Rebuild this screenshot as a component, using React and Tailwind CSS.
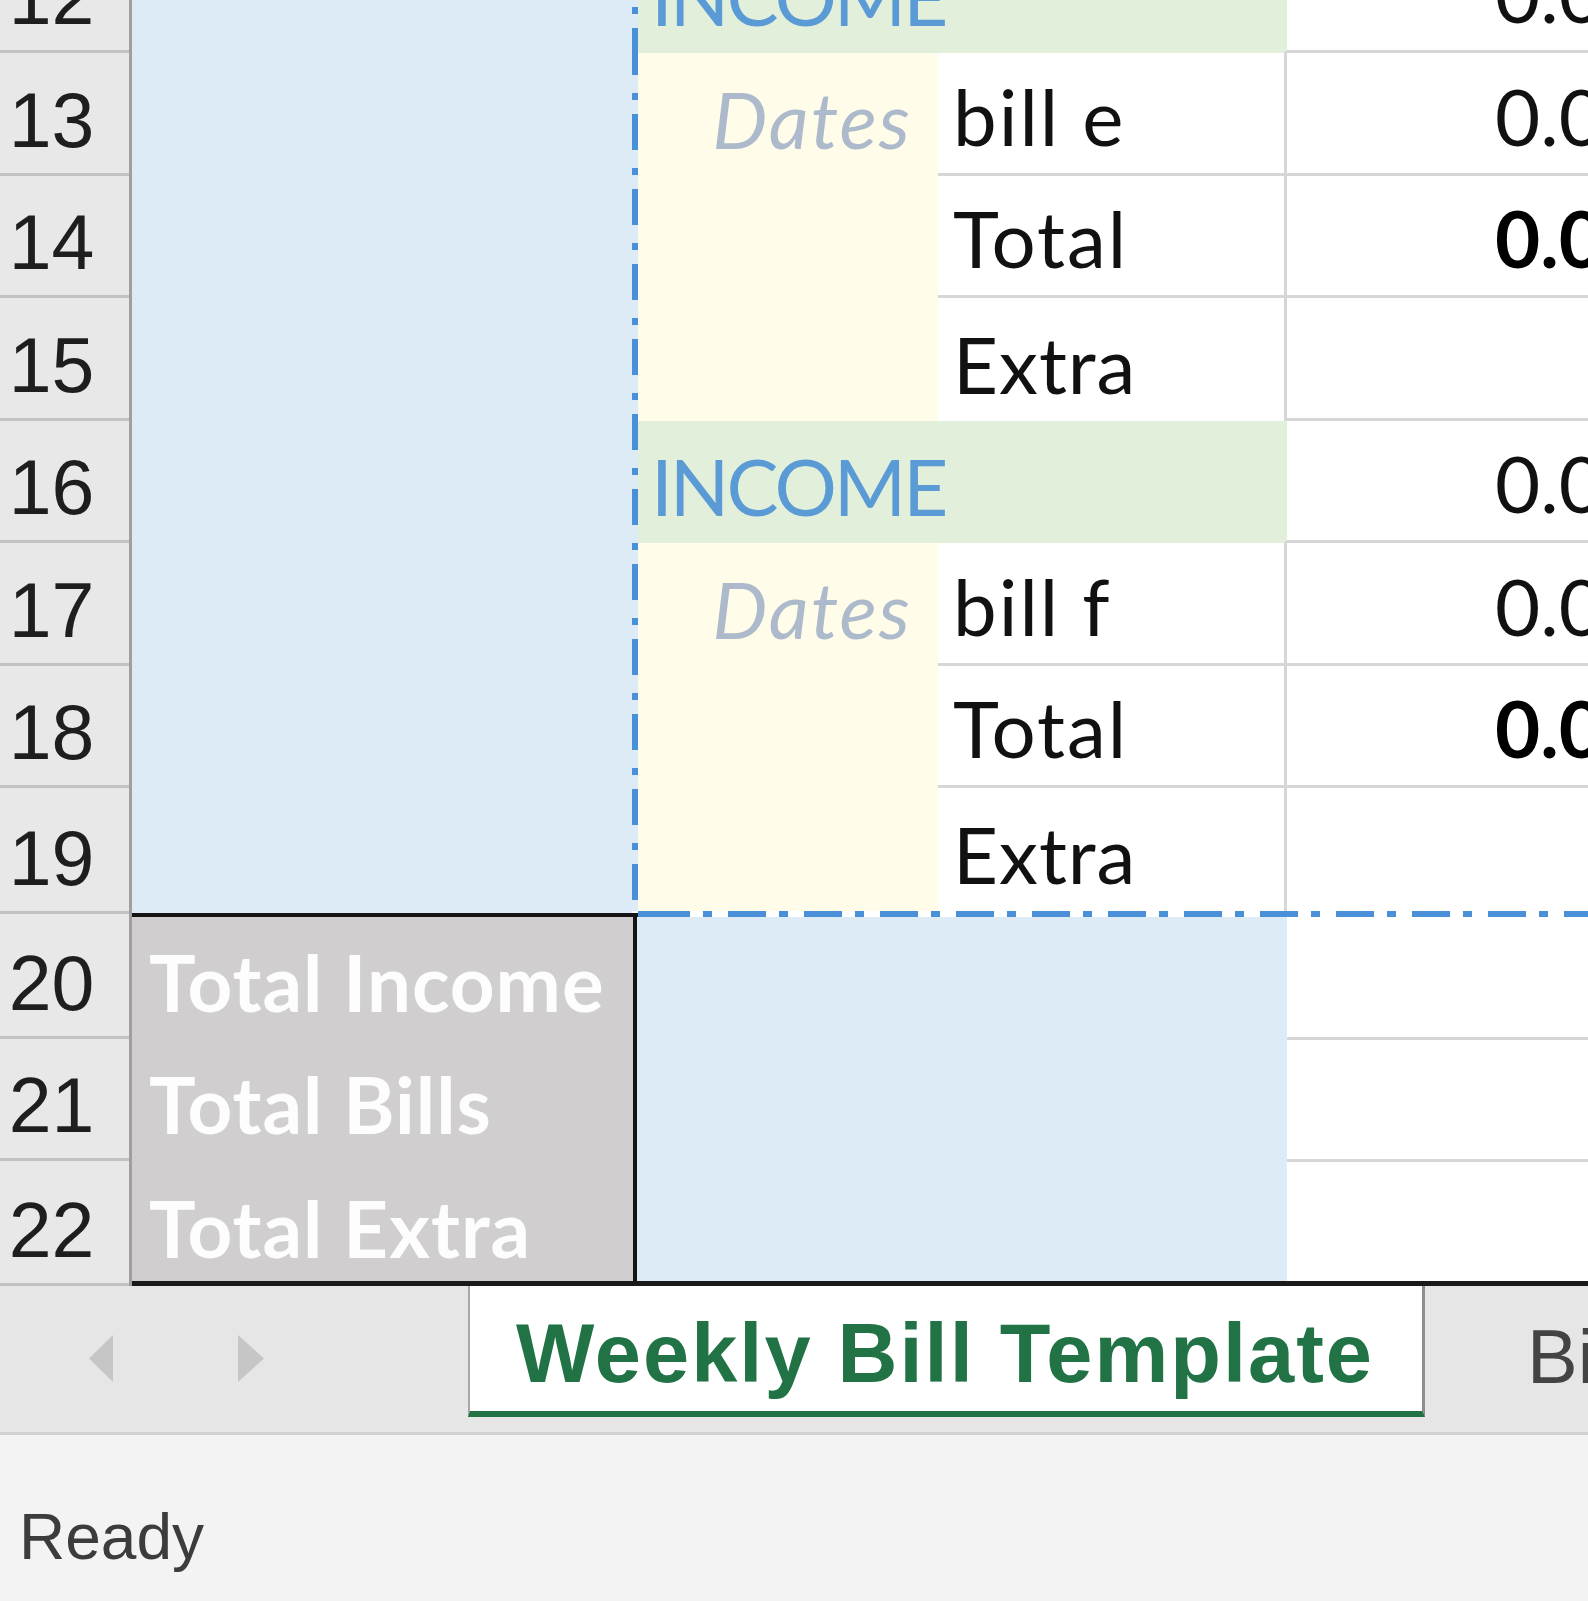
import React from "react";

const cal = "font-['Lato','Liberation_Sans',sans-serif] text-[78px] leading-none";

const headerRows = [
  { n: 12, h: "h-[123px] -mt-[70px]" },
  { n: 13, h: "h-[123px]" },
  { n: 14, h: "h-[122px]" },
  { n: 15, h: "h-[123px]" },
  { n: 16, h: "h-[122px]" },
  { n: 17, h: "h-[123px]" },
  { n: 18, h: "h-[122px]" },
  { n: 19, h: "h-[126px]" },
  { n: 20, h: "h-[125px]" },
  { n: 21, h: "h-[122px]" },
  { n: 22, h: "h-[125px]" },
];

const topRows = [
  { kind: "income", h: "h-[123px] -mt-[70px]", value: "0.00" },
  { kind: "bill", h: "h-[123px]", label: "bill e", value: "0.00" },
  { kind: "total", h: "h-[122px]", label: "Total", value: "0.00" },
  { kind: "extra", h: "h-[123px]", label: "Extra" },
  { kind: "income", h: "h-[122px]", value: "0.00" },
  { kind: "bill", h: "h-[123px]", label: "bill f", value: "0.00" },
  { kind: "total", h: "h-[122px]", label: "Total", value: "0.00" },
  { kind: "extra", h: "h-[123px]", label: "Extra", last: true },
];

const RowHeader = ({ n, h }) => (
  <div
    className={`${h} shrink-0 flex items-end justify-center pr-[26px] pb-[14px] border-b-[3px] border-[#c2c2c2] font-['Liberation_Sans',Arial,sans-serif] text-[77px] leading-none text-[#1e1e1e]`}
  >
    {n}
  </div>
);

const ValueCell = ({ row }) => {
  const green = row.kind === "income";
  return (
    <div
      className={`flex-1 flex items-end pl-[208px] pb-[18px] whitespace-nowrap overflow-hidden bg-white border-l-[3px] ${
        green ? "border-l-[#e2efda]" : "border-l-[#d6d6d6]"
      } ${row.last ? "" : "border-b-[3px] border-b-[#d6d6d6]"} ${cal} ${
        row.kind === "total" ? "font-bold text-black" : "text-[#111]"
      }`}
    >
      {row.value}
    </div>
  );
};

const TopRow = ({ row }) => {
  if (row.kind === "income") {
    return (
      <div className={`${row.h} shrink-0 flex`}>
        <div
          className={`w-[646px] flex items-end pl-[13px] pb-[18px] bg-[#e2efda] text-[#5b9bd5] tracking-[-3px] ${cal}`}
        >
          INCOME
        </div>
        <ValueCell row={row} />
      </div>
    );
  }
  return (
    <div className={`${row.h} shrink-0 flex`}>
      <div
        className={`w-[300px] flex items-end justify-end pr-[26px] pb-[18px] bg-[#fffdea] italic text-[#adbacb] tracking-[2px] ${cal}`}
      >
        {row.kind === "bill" ? "Dates" : ""}
      </div>
      <div
        className={`w-[346px] flex items-end pl-[15px] pb-[18px] bg-white text-[#111] ${cal} ${
          row.kind === "extra" ? "tracking-[1px]" : "tracking-[2px] border-b-[3px] border-b-[#d6d6d6]"
        }`}
      >
        {row.label}
      </div>
      <ValueCell row={row} />
    </div>
  );
};

const totals = [
  { label: "Total Income", h: "h-[123px]", pb: "pb-[19px]" },
  { label: "Total Bills", h: "h-[122px]", pb: "pb-[19px]" },
  { label: "Total Extra", h: "h-[119px]", pb: "pb-[14px]" },
];

export default function App() {
  return (
    <div className="w-[1588px] h-[1601px] overflow-hidden bg-white flex flex-col">
      {/* Sheet grid */}
      <div className="h-[1286px] shrink-0 flex">
        {/* Row numbers */}
        <div className="w-[132px] shrink-0 flex flex-col overflow-hidden bg-[#e8e8e8] border-r-[3px] border-[#9f9f9f]">
          {headerRows.map((r) => (
            <RowHeader key={r.n} n={r.n} h={r.h} />
          ))}
        </div>

        <div className="flex-1 flex flex-col">
          {/* Rows 12 - 19 */}
          <div className="h-[911px] shrink-0 flex overflow-hidden">
            <div className="w-[500px] shrink-0 bg-[#ddebf7]" />
            <div className="w-[6px] shrink-0 bg-[#ddebf7] bg-[repeating-linear-gradient(to_bottom,#4a90d9_0px,#4a90d9_36px,transparent_36px,transparent_54px,#4a90d9_54px,#4a90d9_61px,transparent_61px,transparent_75px)] bg-[position:0px_39px]" />
            <div className="flex-1 flex flex-col">
              {topRows.map((row, i) => (
                <TopRow key={i} row={row} />
              ))}
            </div>
          </div>

          {/* Border between row 19 and 20 */}
          <div className="h-[6px] shrink-0 flex">
            <div className="w-[500px] shrink-0 flex flex-col justify-end bg-[#ddebf7]">
              <div className="h-[4px] bg-[#141414]" />
            </div>
            <div className="w-[6px] shrink-0 flex flex-col justify-end">
              <div className="h-[4px] bg-[#141414]" />
            </div>
            <div className="flex-1 bg-white bg-[repeating-linear-gradient(to_right,#4a90d9_0px,#4a90d9_38px,transparent_38px,transparent_51px,#4a90d9_51px,#4a90d9_60px,transparent_60px,transparent_76px)] bg-[position:14px_0px]" />
          </div>

          {/* Rows 20 - 22 */}
          <div className="h-[364px] shrink-0 flex">
            <div className="w-[500px] shrink-0 flex flex-col bg-[#d0cece]">
              {totals.map((t) => (
                <div
                  key={t.label}
                  className={`${t.h} shrink-0 flex items-end pl-[17px] ${t.pb} font-bold tracking-[1px] text-[#fdfdfd] ${cal}`}
                >
                  {t.label}
                </div>
              ))}
            </div>
            <div className="w-[6px] shrink-0 flex">
              <div className="w-[1px] bg-[#d0cece]" />
              <div className="w-[4px] bg-[#141414]" />
              <div className="w-[1px] bg-[#ddebf7]" />
            </div>
            <div className="w-[649px] shrink-0 bg-[#ddebf7]" />
            <div className="flex-1 flex flex-col bg-white">
              <div className="h-[123px] border-b-[3px] border-[#d6d6d6]" />
              <div className="h-[122px] border-b-[3px] border-[#d6d6d6]" />
              <div className="h-[119px]" />
            </div>
          </div>

          <div className="h-[5px] shrink-0 bg-[#1a1a1a]" />
        </div>
      </div>

      {/* Sheet tabs */}
      <div className="h-[149px] shrink-0 flex items-start bg-[#e6e6e6] border-b-[3px] border-[#d1d1d1] overflow-hidden">
        <div className="w-[468px] shrink-0 flex items-start pt-[49px]">
          <svg className="ml-[89px]" width="24" height="47" viewBox="0 0 24 47">
            <polygon points="0,23.5 24,0 24,47" fill="#c6c6c6" />
          </svg>
          <svg className="ml-[125px]" width="26" height="47" viewBox="0 0 26 47">
            <polygon points="0,0 26,23.5 0,47" fill="#c6c6c6" />
          </svg>
        </div>
        <div className="w-[957px] h-[131px] shrink-0 flex items-end pl-[46px] pb-[16px] bg-white border-l-2 border-l-[#a8a8a8] border-r-[3px] border-r-[#8e8e8e] border-b-[6px] border-b-[#217346] font-['Liberation_Sans',Arial,sans-serif] font-bold text-[83px] tracking-[2px] leading-none text-[#217346] whitespace-nowrap">
          Weekly Bill Template
        </div>
        <div className="h-[131px] flex items-end pl-[102px] pb-[22px] font-['Liberation_Sans',Arial,sans-serif] text-[76px] leading-none text-[#444] whitespace-nowrap">
          Biweekly Bill Template
        </div>
      </div>

      {/* Status bar */}
      <div className="flex-1 bg-[#f3f3f3] pl-[19px] pt-[70px] font-['Liberation_Sans',Arial,sans-serif] text-[64px] leading-none text-[#3c3c3c]">
        Ready
      </div>
    </div>
  );
}
